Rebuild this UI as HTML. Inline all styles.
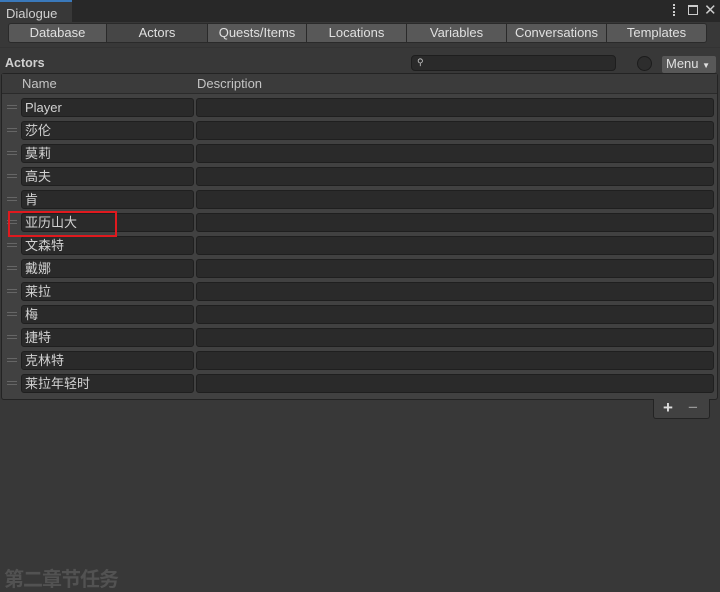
<!DOCTYPE html>
<html><head><meta charset="utf-8"><style>
*{box-sizing:border-box;margin:0;padding:0}
body{width:720px;height:592px;background:#383838;font-family:"Liberation Sans","Noto Sans CJK SC",sans-serif;font-size:12.5px;color:#c4c4c4;position:relative;overflow:hidden}
.abs{position:absolute}
.top{left:0;top:0;width:720px;height:22px;background:#282828}
.tab{left:0;top:0;width:72px;height:22px;background:#383838;border-top:2px solid #3a79bb;padding:4px 6px;font-size:13px;color:#d0d0d0}
.tb{top:23px;height:20px;background:#585858;border:1px solid #2a2a2a;text-align:center;line-height:18px;color:#e0e0e0;font-size:13px}
.list{left:1px;top:73px;width:717px;height:327px;background:#414141;border:1px solid #232323;border-radius:3px}
.hdr{left:0;top:0;width:715px;height:20px;background:#3b3b3b;border-bottom:1px solid #2a2a2a}
.f{height:19px;background:#2a2a2a;border:1px solid #1f1f1f;border-radius:3px;padding:1px 3px;color:#d2d2d2;line-height:16px;font-size:13px}
.h{width:10px;height:4px;border-top:1px solid #666;border-bottom:1px solid #666}
</style></head><body>
<div class="abs top"></div>
<div class="abs tab">Dialogue</div>
<div class="abs" style="left:673px;top:4px;width:2px;height:12px;border-left:2px dotted #ccc"></div>
<div class="abs" style="left:688px;top:5px;width:10px;height:10px;border:1px solid #ccc;border-top:2px solid #ccc"></div>
<div class="abs" style="left:704px;top:1px;color:#ccc;font-size:15px">✕</div>
<div class="abs tb" style="left:8px;width:99px;border-radius:3px 0 0 3px">Database</div>
<div class="abs tb" style="left:106px;width:102px;background:#464646">Actors</div>
<div class="abs tb" style="left:207px;width:100px">Quests/Items</div>
<div class="abs tb" style="left:306px;width:101px">Locations</div>
<div class="abs tb" style="left:406px;width:101px">Variables</div>
<div class="abs tb" style="left:506px;width:101px">Conversations</div>
<div class="abs tb" style="left:606px;width:101px;border-radius:0 3px 3px 0">Templates</div>
<div class="abs" style="left:0;top:47px;width:720px;height:1px;background:#333"></div>
<div class="abs" style="left:5px;top:56px;font-weight:bold;color:#d0d0d0">Actors</div>
<div class="abs" style="left:411px;top:55px;width:205px;height:16px;background:#2a2a2a;border:1px solid #1e1e1e;border-radius:4px;font-size:9px;padding-left:5px;line-height:13px">⚲</div>
<div class="abs" style="left:637px;top:56px;width:15px;height:15px;border-radius:50%;background:#2d2d2d;border:1px solid #1c1c1c"></div>
<div class="abs" style="left:662px;top:56px;width:54px;height:17px;background:#585858;border-radius:2px;padding-left:4px;line-height:16px;color:#e0e0e0;font-size:13px">Menu <span style="font-size:8px">▼</span></div>
<div class="abs list">
<div class="abs hdr"></div>
<div class="abs" style="left:20px;top:2px;font-size:13px">Name</div>
<div class="abs" style="left:195px;top:2px;font-size:13px">Description</div>
</div>
<div id="rows"></div>
<div class="abs" style="left:8px;top:211px;width:109px;height:26px;border:2px solid #e0191e"></div>
<div class="abs" style="left:653px;top:399px;width:57px;height:20px;background:#414141;border:1px solid #232323;border-top:none;border-radius:0 0 3px 3px;font-size:17px;line-height:17px;color:#ddd"><span style="position:absolute;left:9px;font-weight:bold">+</span><span style="position:absolute;left:34px;color:#999">−</span></div>
<div class="abs" style="left:4px;top:566px;font-size:20px;font-weight:bold;color:#525252;font-family:'Noto Sans CJK SC',sans-serif;letter-spacing:-1px;line-height:24px">第二章节任务</div>
<script>
var n=["Player","莎伦","莫莉","高夫","肯","亚历山大","文森特","戴娜","莱拉","梅","捷特","克林特","莱拉年轻时"],h="";
n.forEach(function(t,i){var y=98+i*23;
h+='<div class="abs h" style="left:7px;top:'+(y+7)+'px"></div><div class="abs f" style="left:21px;top:'+y+'px;width:173px">'+t+'</div><div class="abs f" style="left:196px;top:'+y+'px;width:518px"></div>';});
document.getElementById("rows").innerHTML=h;
</script>
</body></html>
